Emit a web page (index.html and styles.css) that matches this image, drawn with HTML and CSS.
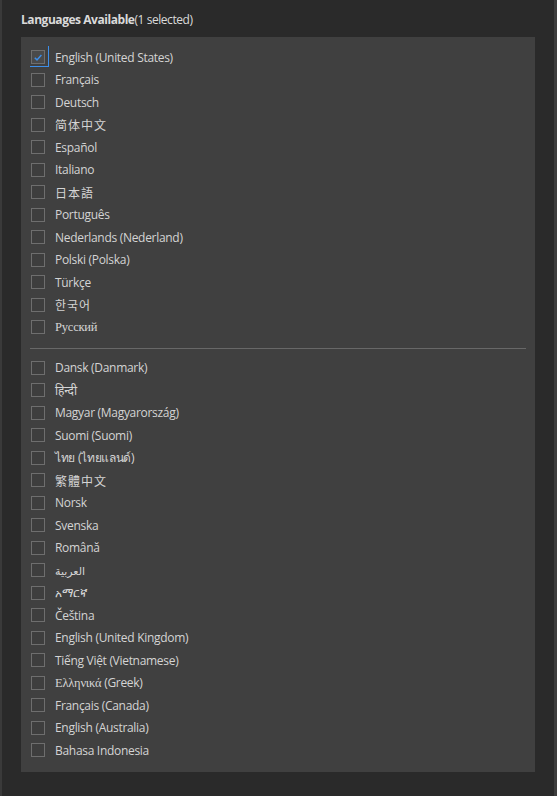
FILE: index.html
```html
<!DOCTYPE html>
<html>
<head>
<meta charset="utf-8">
<link rel="stylesheet" href="styles.css">
</head>
<body>
<div class="page">
  <div class="title"><span class="title-main">Languages Available</span><span class="title-count">(1 selected)</span></div>
  <div class="panel">
    <div class="group">
      <div class="row"><span class="box checked"><svg viewBox="0 0 13 13" width="13" height="13"><path d="M3 6.8 L5.4 9.1 L10.2 3.9" fill="none" stroke="#3d8ee8" stroke-width="1.6"/></svg></span><span class="label">English (United States)</span></div>
      <div class="row"><span class="box"></span><span class="label">Français</span></div>
      <div class="row"><span class="box"></span><span class="label">Deutsch</span></div>
      <div class="row"><span class="box"></span><span class="label cjk">简体中文</span></div>
      <div class="row"><span class="box"></span><span class="label">Español</span></div>
      <div class="row"><span class="box"></span><span class="label">Italiano</span></div>
      <div class="row"><span class="box"></span><span class="label cjk">日本語</span></div>
      <div class="row"><span class="box"></span><span class="label">Português</span></div>
      <div class="row"><span class="box"></span><span class="label">Nederlands (Nederland)</span></div>
      <div class="row"><span class="box"></span><span class="label">Polski (Polska)</span></div>
      <div class="row"><span class="box"></span><span class="label">Türkçe</span></div>
      <div class="row"><span class="box"></span><span class="label cjk">한국어</span></div>
      <div class="row"><span class="box"></span><span class="label serif">Русский</span></div>
    </div>
    <div class="separator"></div>
    <div class="group">
      <div class="row"><span class="box"></span><span class="label">Dansk (Danmark)</span></div>
      <div class="row"><span class="box"></span><span class="label">हिन्दी</span></div>
      <div class="row"><span class="box"></span><span class="label">Magyar (Magyarország)</span></div>
      <div class="row"><span class="box"></span><span class="label">Suomi (Suomi)</span></div>
      <div class="row"><span class="box"></span><span class="label">ไทย (ไทยแลนด์)</span></div>
      <div class="row"><span class="box"></span><span class="label cjk-tc">繁體中文</span></div>
      <div class="row"><span class="box"></span><span class="label">Norsk</span></div>
      <div class="row"><span class="box"></span><span class="label">Svenska</span></div>
      <div class="row"><span class="box"></span><span class="label">Română</span></div>
      <div class="row"><span class="box"></span><span class="label small">العربية</span></div>
      <div class="row"><span class="box"></span><span class="label">አማርኛ</span></div>
      <div class="row"><span class="box"></span><span class="label">Čeština</span></div>
      <div class="row"><span class="box"></span><span class="label">English (United Kingdom)</span></div>
      <div class="row"><span class="box"></span><span class="label">Tiếng Việt (Vietnamese)</span></div>
      <div class="row"><span class="box"></span><span class="label"><span class="serif">Ελληνικά</span> (Greek)</span></div>
      <div class="row"><span class="box"></span><span class="label">Français (Canada)</span></div>
      <div class="row"><span class="box"></span><span class="label">English (Australia)</span></div>
      <div class="row"><span class="box"></span><span class="label">Bahasa Indonesia</span></div>
    </div>
  </div>
</div>
</body>
</html>
```
FILE: styles.css
```css
html, body {
  margin: 0;
  padding: 0;
  background: #2a2a2a;
}
.page {
  box-sizing: border-box;
  width: 557px;
  height: 796px;
  background: #2a2a2a;
  border-left: 2px solid #3a3a3a;
  border-right: 3px solid #3d3d3d;
  padding: 12px 0 0 19px;
  font-family: "Open Sans", "Noto Sans", "DejaVu Sans", sans-serif;
  color: #d4d4d4;
  overflow: hidden;
}
.title {
  height: 16px;
  line-height: 16px;
  font-size: 12px;
  color: #dadada;
  letter-spacing: -0.45px;
}
.title-main {
  font-weight: 700;
}
.panel {
  margin-top: 9px;
  width: 514px;
  background: #404040;
  padding: 9px 0 10px 0;
}
.row {
  height: 22.5px;
  display: flex;
  align-items: center;
  padding-left: 10px;
}
.box {
  position: relative;
  box-sizing: border-box;
  width: 14px;
  height: 14px;
  border: 1px solid #6e6e6e;
  background: #3e3e3e;
  flex: none;
  display: flex;
  align-items: center;
  justify-content: center;
}
.box.checked {
  background: #4a4a4a;
}
.box.checked svg {
  display: block;
}
.box.checked::after {
  content: "";
  position: absolute;
  left: -2px;
  top: -5px;
  width: 18px;
  height: 20px;
  border-right: 1px solid #3d8ee8;
  border-bottom: 1px solid #3d8ee8;
}
.label {
  margin-left: 10px;
  font-size: 12px;
  letter-spacing: -0.3px;
  white-space: nowrap;
}
.cjk {
  font-family: "Noto Sans CJK SC", sans-serif;
  letter-spacing: 1px;
}
.label.cjk-tc {
  font-family: "Noto Sans CJK TC", sans-serif;
  letter-spacing: 1px;
}
.serif {
  font-family: "Liberation Serif", serif;
  font-size: 12.5px;
  letter-spacing: -0.2px;
}
.small {
  font-size: 11px;
}
.separator {
  height: 1px;
  background: #686868;
  margin: 9px 9px 8px 9px;
}
```
